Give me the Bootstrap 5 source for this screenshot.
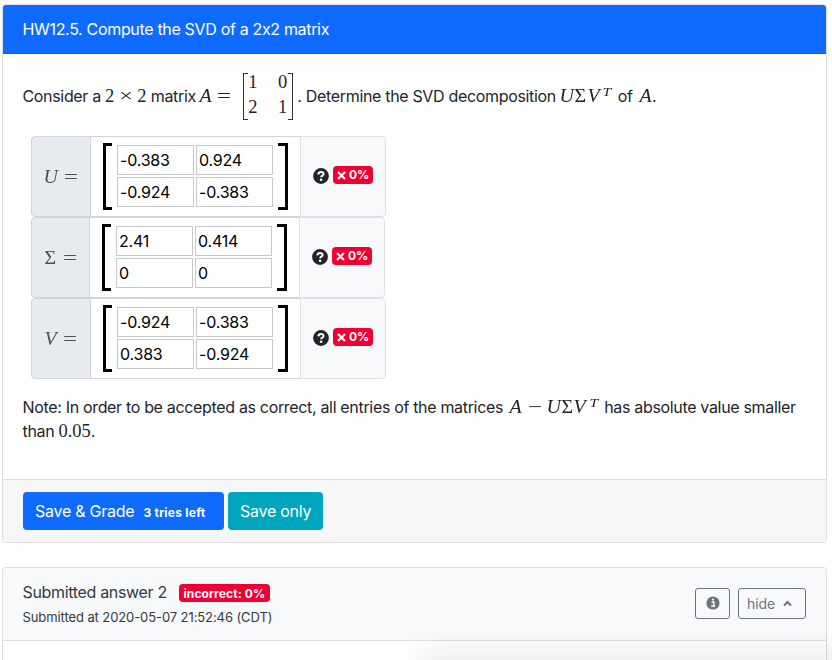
<!DOCTYPE html>
<html lang="en">
<head>
<meta charset="utf-8">
<meta name="viewport" content="width=device-width, initial-scale=1">
<title>HW12.5</title>
<link href="https://cdn.jsdelivr.net/npm/bootstrap@5.3.0/dist/css/bootstrap.min.css" rel="stylesheet">
<style>
body{font-family:Inter,"Liberation Sans",sans-serif;font-size:16px;letter-spacing:-.33px;color:#212529;background:#fff;height:660px;overflow:hidden;position:relative}
.panel{margin:0 5px 0 2px;border-radius:4px;border-color:#dfdfdf}
.question{height:539px}
.question>.card-header{height:49px;padding:12px 19.5px;background:#0f6bff;border-bottom-color:#0d60e8;border-radius:3px 3px 0 0}
.question>.card-body{padding:18px 19.5px 0}
.question>.card-footer{height:63px;padding:12px 20px 0;background:#f7f7f7;border-color:#dfdfdf}
.m{font-family:"Liberation Serif","Times New Roman",serif;font-size:18.5px;letter-spacing:0;line-height:1;white-space:nowrap}
.m .op{display:inline-block;width:14px;margin:0 5px;text-align:center;transform:scaleX(1.35)}
.m .times{margin:0 4.5px;transform:scaleX(1.3)}
.m .sigma{display:inline-block;transform:scaleX(1.08);margin:0 1.5px 0 1px}
.m .wide{display:inline-block;transform:scaleX(1.08);margin-right:1px}
.m sup{font-size:13.5px;top:-.45em;font-style:italic;margin:0 3px 0 3px;display:inline-block;transform:scaleX(1.15)}
.intro{height:48px;white-space:nowrap}
.mat{width:50px;height:47px;position:relative;display:grid;grid-template-columns:1fr 1fr;padding:0 6px 0 5px;line-height:26px;margin:0 4px 0 7px}
.mat span{height:24px;margin-top:-4px}
.mat span:nth-child(n+3){margin-top:0}
.mat span:nth-child(even){text-align:right}
.mat::before,.mat::after{content:"";position:absolute;top:0;bottom:0;width:5px;border:1px solid #333}
.mat::before{left:0;border-right:0}
.mat::after{right:0;border-left:0}
.answers{margin:16px 0 0 8.5px;width:355px}
.answer{height:81px;width:355px}
.answer.narrow{width:354px}
.lab{width:60px;background:#e8ebee;border:1px solid #ced4da;border-radius:4px 0 0 4px;color:#495057}
.lab>span{padding-top:1px}
.lab .op{margin-right:0}
.narrow .lab{width:59px}
.field{width:209px;border:solid #ced4da;border-width:1px 0;padding-left:12px}
.bracket{width:9px;height:67px;border:3px solid #000}
.bracket.open{border-right:0}
.bracket.close{border-left:0;width:10px}
.cells{display:grid;grid-template-columns:77px 77px;gap:2px;margin:0 5px 1px}
.cells input{width:77px;height:30px;border:1px solid #c8c8c8;padding:0 2px;color:#000;background:#fff;font-size:16px;letter-spacing:-.2px;border-radius:0}
.result{width:86px;border:1px solid #dee2e6;background:#f8f9fb;border-radius:0 4px 4px 0;padding:0 0 2px 12px}
.tag{background:#ee0033;color:#fff;border-radius:4px;font-size:12px;font-weight:700;line-height:18px;height:18px;letter-spacing:-.2px}
.score{width:40px;height:18px;margin:-1px 0 0 4px}
.score svg{margin-right:3px}
.note{margin:16px 0 0;line-height:24px}
.gap-math{margin-left:3px}
.n2{letter-spacing:-.33px}
.act{height:38px;border-radius:4px;border:0;padding:0 12px;color:#fff;font-size:16px;letter-spacing:-.25px;white-space:nowrap}
.grade{width:201px;background:#0f6bff}
.grade small{font-size:12px;font-weight:700;margin-left:9px;letter-spacing:.25px}
.saveonly{width:95px;background:#00a6bd}
.submission{margin-top:24px;height:93px;border-bottom:0;border-radius:4px 4px 0 0}
.submission>.card-header{height:73px;padding:0 20px 2px 19.5px;background:#f8f9fb;border-color:#dfdfdf;color:#343a40}
.incorrect{width:91px;height:18px;line-height:19px;margin:3px 0 0 12px;white-space:nowrap;text-align:center;letter-spacing:.1px}
.when{font-size:13px;letter-spacing:-.09px;line-height:20px;margin-top:3px}
.mini{height:31px;border:1px solid #6c757d;border-radius:3px;color:#6c757d;background:transparent;font-size:14px;padding:0;letter-spacing:-.15px}
.info{width:35px}
.toggle{width:68px;padding:0 5px 0 0}
.popshadow{position:absolute;right:0;bottom:0;width:432px;height:30px;background:linear-gradient(rgba(0,0,0,0),rgba(0,0,0,.055));-webkit-mask-image:linear-gradient(90deg,transparent,#000 45px);mask-image:linear-gradient(90deg,transparent,#000 45px)}
</style>
<script src="https://cdn.jsdelivr.net/npm/bootstrap@5.3.0/dist/js/bootstrap.bundle.min.js"></script>
</head>
<body>
<main class="pt-1">
<section class="card panel question">
  <div class="card-header text-white">HW12.5. Compute the SVD of a 2x2 matrix</div>
  <div class="card-body">
    <div class="intro d-flex align-items-center">
      <span>Consider a&nbsp;</span><span class="m">2<span class="op times">×</span>2</span><span>&nbsp;matrix&nbsp;</span><span class="m ms-px"><i class="wide">A</i><span class="op">=</span></span>
      <span class="m mat"><span>1</span><span>0</span><span>2</span><span>1</span></span>
      <span>. Determine the SVD decomposition&nbsp;</span><span class="m"><i class="wide">U</i><span class="sigma">Σ</span><i class="wide">V</i><sup>T</sup></span><span>&nbsp;of&nbsp;</span><span class="m"><i class="wide gap-math">A</i></span>.
    </div>
    <div class="answers">
      <div class="answer d-flex">
        <div class="lab m d-flex align-items-center justify-content-center"><span><i class="wide">U</i><span class="op">=</span></span></div>
        <div class="field d-flex align-items-center"><span class="bracket open"></span><div class="cells"><input value="-0.383"><input value="0.924"><input value="-0.924"><input value="-0.383"></div><span class="bracket close"></span></div>
        <div class="result d-flex align-items-center"><svg width="16" height="16" viewBox="0 0 16 16"><circle cx="8" cy="8" r="7.9" fill="#212529"/><path d="M5.3 6.3C5.5 4.7 6.6 3.9 8 3.9c1.5 0 2.6.8 2.6 2.1 0 1.7-2.4 1.6-2.4 3.2" fill="none" stroke="#fff" stroke-width="2"/><circle cx="8.1" cy="11.8" r="1.3" fill="#fff"/></svg><span class="tag score d-flex align-items-center justify-content-center"><svg width="9" height="9" viewBox="0 0 9 9"><path d="M1 1l7 7M8 1L1 8" stroke="#fff" stroke-width="2.2"/></svg>0%</span></div>
      </div>
      <div class="answer narrow d-flex">
        <div class="lab m d-flex align-items-center justify-content-center"><span><span class="sigma">Σ</span><span class="op">=</span></span></div>
        <div class="field d-flex align-items-center"><span class="bracket open"></span><div class="cells"><input value="2.41"><input value="0.414"><input value="0"><input value="0"></div><span class="bracket close"></span></div>
        <div class="result d-flex align-items-center"><svg width="16" height="16" viewBox="0 0 16 16"><circle cx="8" cy="8" r="7.9" fill="#212529"/><path d="M5.3 6.3C5.5 4.7 6.6 3.9 8 3.9c1.5 0 2.6.8 2.6 2.1 0 1.7-2.4 1.6-2.4 3.2" fill="none" stroke="#fff" stroke-width="2"/><circle cx="8.1" cy="11.8" r="1.3" fill="#fff"/></svg><span class="tag score d-flex align-items-center justify-content-center"><svg width="9" height="9" viewBox="0 0 9 9"><path d="M1 1l7 7M8 1L1 8" stroke="#fff" stroke-width="2.2"/></svg>0%</span></div>
      </div>
      <div class="answer d-flex">
        <div class="lab m d-flex align-items-center justify-content-center"><span><i class="wide">V</i><span class="op">=</span></span></div>
        <div class="field d-flex align-items-center"><span class="bracket open"></span><div class="cells"><input value="-0.924"><input value="-0.383"><input value="0.383"><input value="-0.924"></div><span class="bracket close"></span></div>
        <div class="result d-flex align-items-center"><svg width="16" height="16" viewBox="0 0 16 16"><circle cx="8" cy="8" r="7.9" fill="#212529"/><path d="M5.3 6.3C5.5 4.7 6.6 3.9 8 3.9c1.5 0 2.6.8 2.6 2.1 0 1.7-2.4 1.6-2.4 3.2" fill="none" stroke="#fff" stroke-width="2"/><circle cx="8.1" cy="11.8" r="1.3" fill="#fff"/></svg><span class="tag score d-flex align-items-center justify-content-center"><svg width="9" height="9" viewBox="0 0 9 9"><path d="M1 1l7 7M8 1L1 8" stroke="#fff" stroke-width="2.2"/></svg>0%</span></div>
      </div>
    </div>
    <p class="note">Note: In order to be accepted as correct, all entries of the matrices <span class="m gap-math"><i class="wide">A</i><span class="op">−</span><i class="wide">U</i><span class="sigma">Σ</span><i class="wide">V</i><sup>T</sup></span> <span class="n2">has absolute value smaller</span><br>than <span class="m">0.05</span>.</p>
  </div>
  <div class="card-footer d-flex gap-1">
    <button class="act grade text-start">Save &amp; Grade<small>3 tries left</small></button><button class="act saveonly">Save only</button>
  </div>
</section>
<section class="card panel submission">
  <div class="card-header d-flex align-items-center">
    <div class="me-auto">
      <div class="d-flex align-items-center"><span>Submitted answer 2</span><span class="tag incorrect">incorrect: 0%</span></div>
      <div class="when">Submitted at 2020-05-07 21:52:46 (CDT)</div>
    </div>
    <div class="d-flex gap-2">
      <button class="mini info d-flex align-items-center justify-content-center"><svg width="14" height="14" viewBox="0 0 14 14"><circle cx="7" cy="7" r="6.6" fill="#6c757d"/><path d="M5.6 6h2.2v4M5.2 10.2h3.8" fill="none" stroke="#fff" stroke-width="1.5"/><circle cx="7" cy="3.6" r="1.1" fill="#fff"/></svg></button>
      <button class="mini toggle d-flex align-items-center justify-content-center">hide<svg width="9" height="7" viewBox="0 0 9 7" class="ms-2"><path d="M1 5.4l3.5-3.5L8 5.4" fill="none" stroke="#6c757d" stroke-width="2.1"/></svg></button>
    </div>
  </div>
</section>
</main>
<div class="popshadow"></div>
</body>
</html>
